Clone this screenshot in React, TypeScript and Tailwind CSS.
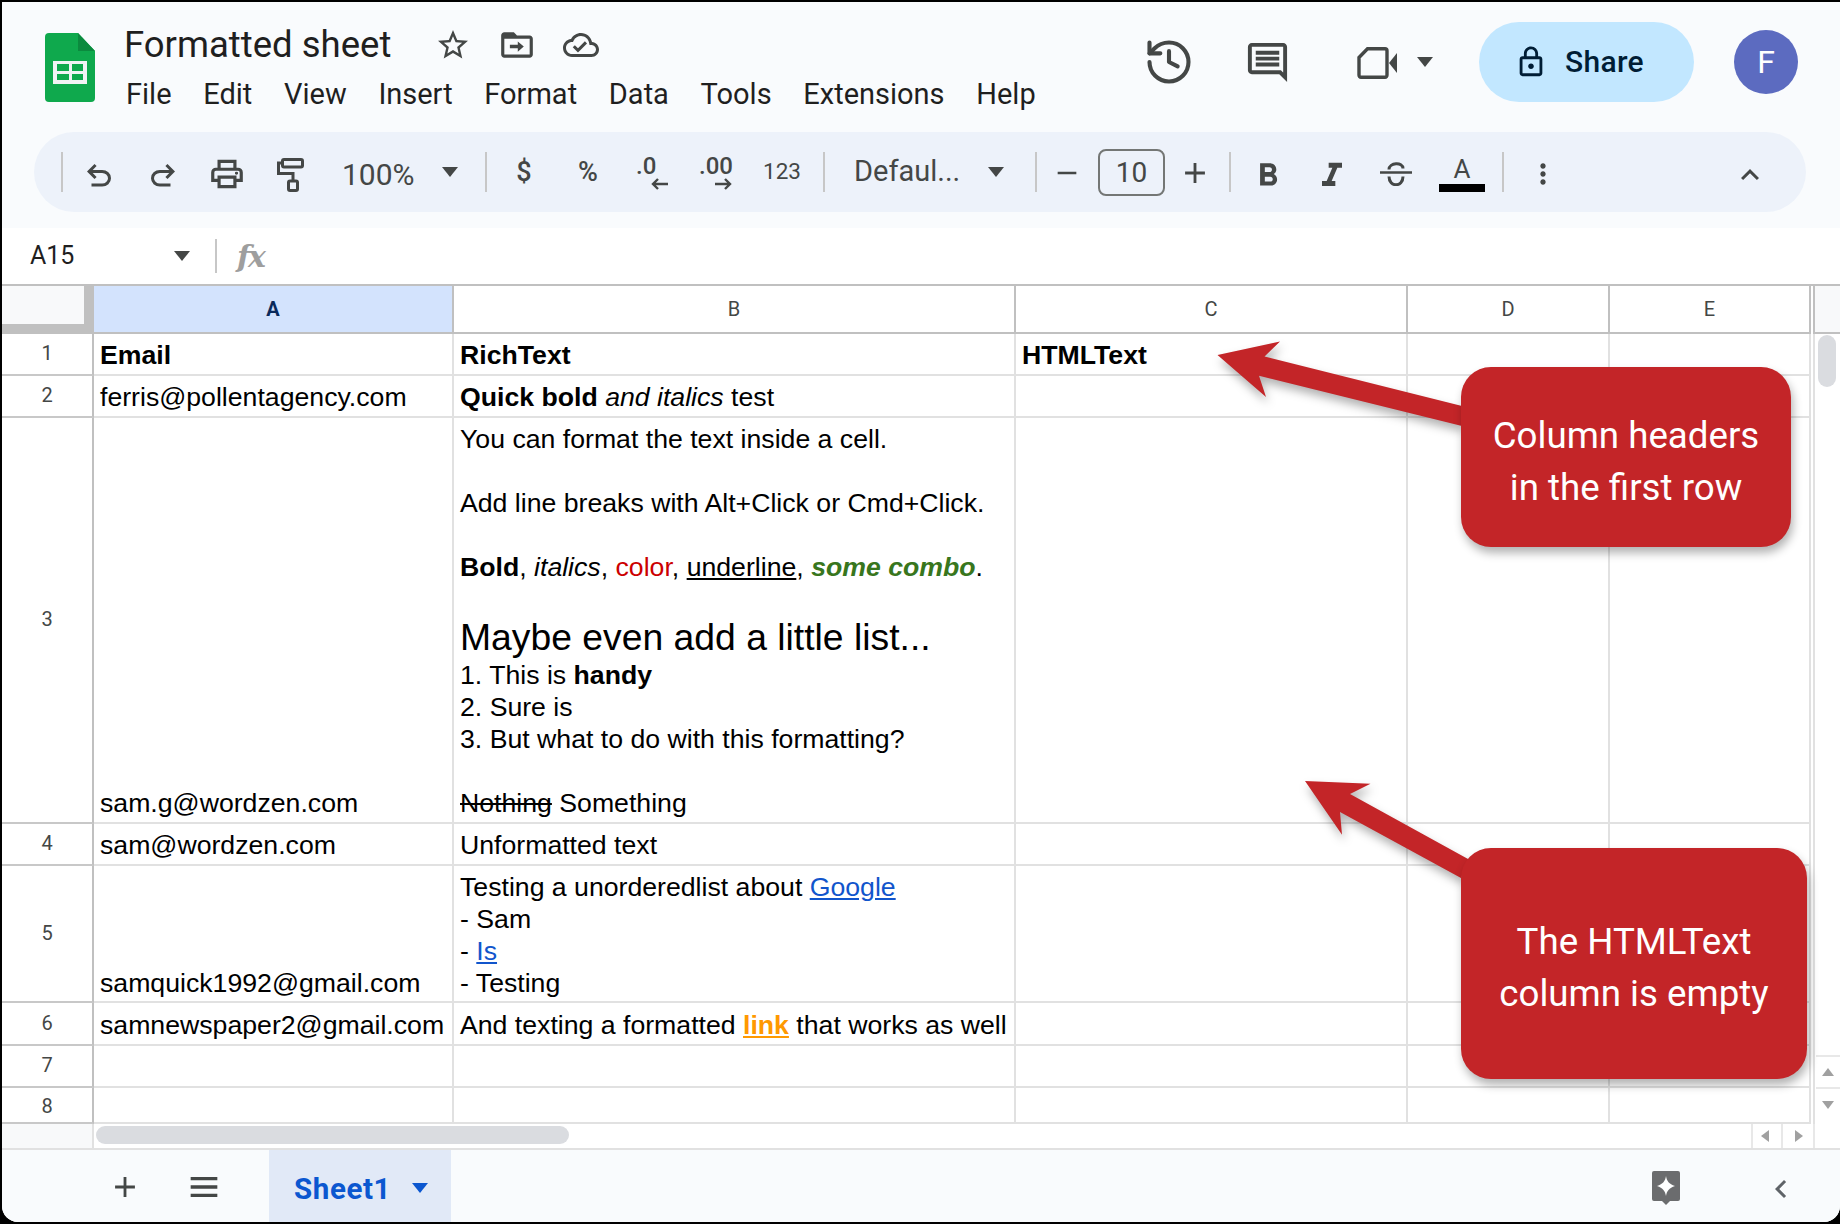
import { History } from 'lucide-react'
import type { ReactNode } from 'react'

const ICON = 'fill-[#444746]'

function Sym({ d, className }: { d: string; className?: string }) {
  return (
    <svg viewBox="0 -960 960 960" className={className}>
      <path d={d} />
    </svg>
  )
}

function Mat({ d, className }: { d: string; className?: string }) {
  return (
    <svg viewBox="0 0 24 24" className={className}>
      <path d={d} />
    </svg>
  )
}

const paths = {
  undo: 'M280-200v-80h284q63 0 109.5-40T720-420q0-60-46.5-100T564-560H312l104 104-56 56-200-200 200-200 56 56-104 104h252q97 0 166.5 63T800-420q0 94-69.5 157T564-200H280Z',
  redo: 'M396-200q-97 0-166.5-63T160-420q0-94 69.5-157T396-640h252L544-744l56-56 200 200-200 200-56-56 104-104H396q-63 0-109.5 40T240-420q0 60 46.5 100T396-280h284v80H396Z',
  print: 'M640-640v-120H320v120h-80v-200h480v200h-80Zm-480 80h640-640Zm560 100q17 0 28.5-11.5T760-500q0-17-11.5-28.5T720-540q-17 0-28.5 11.5T680-500q0 17 11.5 28.5T720-460Zm-80 260v-160H320v160h320Zm80 80H240v-160H80v-240q0-51 35-85.5t85-34.5h560q51 0 85.5 34.5T880-520v240H720v160Zm80-240v-160q0-17-11.5-28.5T760-560H200q-17 0-28.5 11.5T160-520v160h80v-80h480v80h80Z',
  star: 'M22 9.24l-7.19-.62L12 2 9.19 8.63 2 9.24l5.46 4.73L5.82 21 12 17.27 18.18 21l-1.63-7.03L22 9.24zM12 15.4l-3.76 2.27 1-4.28-3.32-2.88 4.38-.38L12 6.1l1.71 4.04 4.38.38-3.32 2.88 1 4.28L12 15.4z',
  folder: 'M20 6h-8l-2-2H4c-1.1 0-2 .9-2 2v12c0 1.1.9 2 2 2h16c1.1 0 2-.9 2-2V8c0-1.1-.9-2-2-2zm0 12H4V8h16v10zM12.500 9.800l3.800 3.200-3.800 3.200v-2.100H7.500v-2.200h5z',
  cloud: 'M19.35 10.04C18.67 6.59 15.64 4 12 4 9.11 4 6.6 5.64 5.35 8.04 2.34 8.36 0 10.91 0 14c0 3.31 2.69 6 6 6h13c2.76 0 5-2.24 5-5 0-2.64-2.05-4.78-4.65-4.96zM19 18H6c-2.21 0-4-1.79-4-4 0-2.05 1.53-3.76 3.56-3.97l1.07-.11.5-.95C8.08 7.14 9.94 6 12 6c2.62 0 4.88 1.86 5.39 4.43l.3 1.5 1.53.11c1.56.1 2.78 1.41 2.78 2.96 0 1.65-1.35 3-3 3zm-9-3.82l-2.09-2.09L6.5 13.5 10 17l6.01-6.01-1.41-1.41z',
  comment: 'M21.99 4c0-1.1-.89-2-1.99-2H4c-1.1 0-2 .9-2 2v12c0 1.1.9 2 2 2h14l4 4-.01-18zM20 4v13.17L18.83 16H4V4h16zM6 12h12v2H6zm0-3h12v2H6zm0-3h12v2H6z',
  lock: 'M18 8h-1V6c0-2.76-2.24-5-5-5S7 3.24 7 6v2H6c-1.1 0-2 .9-2 2v10c0 1.1.9 2 2 2h12c1.1 0 2-.9 2-2V10c0-1.1-.9-2-2-2zM9 6c0-1.66 1.34-3 3-3s3 1.34 3 3v2H9V6zm9 14H6V10h12v10zm-6-3c1.1 0 2-.9 2-2s-.9-2-2-2-2 .9-2 2 .9 2 2 2z',
  bold: 'M15.6 10.79c.97-.67 1.65-1.77 1.65-2.79 0-2.26-1.75-4-4-4H7v14h7.04c2.09 0 3.71-1.7 3.71-3.79 0-1.52-.86-2.82-2.15-3.42zM10 6.5h3c.83 0 1.5.67 1.5 1.5s-.67 1.5-1.5 1.5h-3v-3zm3.5 9H10v-3h3.5c.83 0 1.5.67 1.5 1.5s-.67 1.5-1.5 1.5z',
  italic: 'M10 4v3h2.21l-3.42 8H6v3h8v-3h-2.21l3.42-8H18V4z',
  more: 'M12 8c1.1 0 2-.9 2-2s-.9-2-2-2-2 .9-2 2 .9 2 2 2zm0 2c-1.1 0-2 .9-2 2s.9 2 2 2 2-.9 2-2-.9-2-2-2zm0 6c-1.1 0-2 .9-2 2s.9 2 2 2 2-.9 2-2-.9-2-2-2z',
  up: 'M7.41 15.41L12 10.83l4.59 4.58L18 14l-6-6-6 6z',
  plus: 'M19 13h-6v6h-2v-6H5v-2h6V5h2v6h6v2z',
  minus: 'M19 13H5v-2h14v2z',
  menu: 'M4 18h16v-2H4v2zm0-5h16v-2H4v2zM4 6v2h16V6H4z',
  left: 'M15.41 7.41L14 6l-6 6 6 6 1.41-1.41L10.83 12z',
}

function Caret({ className = 'fill-[#444746]' }: { className?: string }) {
  return (
    <svg viewBox="0 0 16 10" className={`w-[16px] h-[10px] ${className}`}>
      <path d="M0 0h16L8 10z" />
    </svg>
  )
}

function Divider({ ml }: { ml: string }) {
  return <div className={`w-[2px] h-[40px] bg-[#c7c7c7] ${ml}`} />
}

function Slot({ children }: { children: ReactNode }) {
  return <div className="w-[64px] h-[48px] flex items-center justify-center shrink-0">{children}</div>
}

function Logo() {
  return (
    <svg viewBox="0 0 50 69" className="w-[50px] h-[69px] shrink-0">
      <path d="M4 0h29l17 18v47a4 4 0 0 1-4 4H4a4 4 0 0 1-4-4V4a4 4 0 0 1 4-4z" fill="#0fa94d" />
      <path d="M33 0l17 18H33z" fill="#0b8a3e" />
      <path d="M8 28h34v23H8zM12 31v7h12v-7zM27 31v7h11v-7zM12 41v6h12v-6zM27 41v6h11v-6z" fill="#f1f3f4" fillRule="evenodd" />
    </svg>
  )
}

function TopBar() {
  return (
    <div className="flex h-[130px]">
      <div className="ml-[43px] mt-[31px]">
        <Logo />
      </div>
      <div className="ml-[30px] mt-[21px] flex flex-col">
        <div className="flex items-center h-[40px]">
          <span className="text-[36.5px] leading-[40px] text-[#1f1f1f] font-['Roboto',sans-serif] w-[311px] whitespace-nowrap mt-[4px] -ml-[1px]">Formatted sheet</span>
          <Mat d={paths.star} className={`w-[36px] h-[36px] mt-[4px] ${ICON}`} />
          <Mat d={paths.folder} className={`w-[38px] h-[38px] ml-[27px] mt-[4px] ${ICON}`} />
          <Mat d={paths.cloud} className={`w-[36px] h-[36px] ml-[27px] mt-[4px] ${ICON}`} />
        </div>
        <div className="flex gap-[31.7px] mt-[12px] ml-[1px] text-[29px] leading-[38px] text-[#1f1f1f] font-['Roboto',sans-serif]">
          {['File', 'Edit', 'View', 'Insert', 'Format', 'Data', 'Tools', 'Extensions', 'Help'].map((m) => (
            <span key={m}>{m}</span>
          ))}
        </div>
      </div>
      <div className="ml-auto mr-[42px] mt-[20px] h-[80px] flex items-center">
        <History className="w-[52px] h-[52px] text-[#444746]" strokeWidth={1.9} />
        <Mat d={paths.comment} className={`w-[47px] h-[47px] ml-[49px] ${ICON}`} />
        <svg viewBox="0 0 40 32" className="w-[40px] h-[32px] ml-[66px] mt-[2px]">
          <path d="M10.500 1.800H28a2 2 0 0 1 2 2V28a2 2 0 0 1-2 2.200H4a2 2 0 0 1-2-2.200V10.500z" fill="none" stroke="#444746" strokeWidth="3.4" />
          <path d="M32 16L40 6v20z" fill="#444746" />
        </svg>
        <div className="ml-[20px]">
          <Caret />
        </div>
        <button className="ml-[46px] w-[215px] h-[80px] rounded-[40px] bg-[#c2e7ff] flex items-center pl-[35px] text-[#001d35]">
          <Mat d={paths.lock} className="w-[34px] h-[34px] fill-[#001d35]" />
          <span className="ml-[17px] mb-[2px] text-[30px] font-medium font-['Roboto',sans-serif] tracking-[0.3px]">Share</span>
        </button>
        <div className="ml-[40px] w-[64px] h-[64px] rounded-full bg-[#5c6bc0] flex items-center justify-center text-white text-[32px] font-['Roboto',sans-serif]">
          F
        </div>
      </div>
    </div>
  )
}

function Toolbar() {
  const label = "font-['Roboto',sans-serif] text-[#444746]"
  return (
    <div className="ml-[32px] mr-[34px] h-[80px] rounded-[40px] bg-[#edf2fa] flex items-center pl-[27px] pr-[40px]">
      <Divider ml="" />
      <div className="flex ml-[4px]">
        <Slot><Sym d={paths.undo} className={`w-[36px] h-[36px] mt-[8px] ${ICON}`} /></Slot>
        <Slot><Sym d={paths.redo} className={`w-[36px] h-[36px] mt-[8px] ${ICON}`} /></Slot>
        <Slot><Sym d={paths.print} className={`w-[38px] h-[38px] mt-[4px] ${ICON}`} /></Slot>
        <Slot>
          <svg viewBox="0 0 27 34" className="w-[27px] h-[34px] mt-[6px] -ml-[2px] fill-none stroke-[#444746]" strokeWidth="3">
            <rect x="5.500" y="1.500" width="20" height="7.500" rx="1.500" />
            <path d="M5 5H1.500v10.500H16V23" />
            <rect x="11.500" y="23" width="9" height="9.500" rx="1.500" />
          </svg>
        </Slot>
      </div>
      <span className={`${label} ml-[19px] text-[30px] w-[73px] mt-[4px] whitespace-nowrap`}>100%</span>
      <div className="ml-[27px]"><Caret /></div>
      <Divider ml="ml-[27px]" />
      <div className="flex ml-[5px]">
        <Slot><span className={`${label} text-[27px] font-medium`}>$</span></Slot>
        <Slot><span className={`${label} text-[27px] font-medium`}>%</span></Slot>
        <Slot>
          <div className="flex flex-col">
            <span className={`${label} text-[24px] leading-[24px] font-medium`}>.0</span>
            <svg viewBox="0 0 18 12" className="w-[18px] h-[12px] ml-[14px] fill-none stroke-[#444746]" strokeWidth="2.4">
              <path d="M18 6H3M8 1L3 6l5 5" />
            </svg>
          </div>
        </Slot>
        <Slot>
          <div className="flex flex-col">
            <span className={`${label} text-[24px] leading-[24px] font-medium`}>.00</span>
            <svg viewBox="0 0 18 12" className="w-[18px] h-[12px] ml-[16px] fill-none stroke-[#444746]" strokeWidth="2.4">
              <path d="M0 6h15M10 1l5 5-5 5" />
            </svg>
          </div>
        </Slot>
        <Slot><span className={`${label} text-[22.5px] ml-[4px]`}>123</span></Slot>
      </div>
      <Divider ml="ml-[11px]" />
      <span className={`${label} ml-[29px] text-[29px] w-[106px] whitespace-nowrap`}>Defaul...</span>
      <div className="ml-[28px]"><Caret /></div>
      <Divider ml="ml-[31px]" />
      <Mat d={paths.minus} className={`w-[32px] h-[32px] ml-[14px] mt-[2px] ${ICON}`} />
      <div className={`${label} ml-[15px] w-[67px] h-[47px] border-2 border-[#747775] rounded-[8px] flex items-center justify-center pt-[2px] text-[28px]`}>10</div>
      <Mat d={paths.plus} className={`w-[34px] h-[34px] ml-[13px] mt-[2px] ${ICON}`} />
      <Divider ml="ml-[17px]" />
      <div className="flex ml-[5px]">
        <Slot><Mat d={paths.bold} className={`w-[38px] h-[38px] mt-[8px] shrink-0 ${ICON}`} /></Slot>
        <Slot><Mat d={paths.italic} className={`w-[40px] h-[40px] mt-[8px] shrink-0 ${ICON}`} /></Slot>
        <Slot>
          <svg viewBox="0 0 32 24" className="w-[32px] h-[24px] mt-[4px] fill-none stroke-[#444746]" strokeWidth="3">
            <path d="M0 10.500h32" strokeWidth="2.400" />
            <path d="M9 7.500C9 .5 23-.5 23 6.500M9 14.500c0 11 14 11 14 0" />
          </svg>
        </Slot>
        <Slot>
          <div className="flex flex-col items-center mt-[4px] ml-[4px]">
            <span className={`${label} text-[26px] leading-[26px]`}>A</span>
            <div className="w-[46px] h-[8px] bg-black mt-[2px]" />
          </div>
        </Slot>
      </div>
      <Divider ml="ml-[10px]" />
      <Mat d={paths.more} className={`w-[32px] h-[32px] ml-[23px] mt-[4px] ${ICON}`} />
      <Mat d={paths.up} className={`w-[36px] h-[36px] ml-auto mr-[-2px] mt-[6px] ${ICON}`} />
    </div>
  )
}

function FormulaBar() {
  return (
    <div className="h-[56px] bg-white flex items-center font-['Roboto',sans-serif]">
      <span className="ml-[28px] text-[25px] text-[#1f1f1f] w-[144px]">A15</span>
      <Caret />
      <div className="ml-[25px] w-[2px] h-[34px] bg-[#c7c7c7]" />
      <span className="ml-[20px] text-[30px] italic font-bold tracking-[-2px] text-[#9e9e9e] font-['DejaVu_Serif',serif]">fx</span>
    </div>
  )
}

const colLetters = ['A', 'B', 'C', 'D', 'E']
const rowNumbers = ['1', '2', '3', '4', '5', '6', '7', '8']

function Cell({ children, tall }: { children?: ReactNode; tall?: boolean }) {
  return (
    <div className={`border-r-2 border-b-2 border-[#e1e1e1] flex flex-col justify-end pl-[6px] text-[26.67px] leading-[32px] text-black whitespace-nowrap overflow-hidden ${tall ? 'pb-[2px]' : 'pb-[3px]'}`}>
      {children}
    </div>
  )
}

const rows: ReactNode[][] = [
  [<b>Email</b>, <b>RichText</b>, <b>HTMLText</b>],
  [
    'ferris@pollentagency.com',
    <span><b>Quick bold</b> <i>and italics</i> test</span>,
  ],
  [
    'sam.g@wordzen.com',
    <>
      <div>You can format the text inside a cell.</div>
      <div className="h-[32px]" />
      <div>Add line breaks with Alt+Click or Cmd+Click.</div>
      <div className="h-[32px]" />
      <div>
        <b>Bold</b>, <i>italics</i>, <span className="text-[#cc0000]">color</span>, <span className="underline">underline</span>,{' '}
        <b className="italic text-[#38761d]">some combo</b>.
      </div>
      <div className="h-[32px]" />
      <div className="text-[37.3px] leading-[44px]">Maybe even add a little list...</div>
      <div>1. This is <b>handy</b></div>
      <div>2. Sure is</div>
      <div>3. But what to do with this formatting?</div>
      <div className="h-[32px]" />
      <div><span className="line-through">Nothing</span> Something</div>
    </>,
  ],
  ['sam@wordzen.com', 'Unformatted text'],
  [
    'samquick1992@gmail.com',
    <>
      <div>Testing a unorderedlist about <span className="underline text-[#1155cc]">Google</span></div>
      <div>- Sam</div>
      <div>- <span className="underline text-[#1155cc]">Is</span></div>
      <div>- Testing</div>
    </>,
  ],
  [
    'samnewspaper2@gmail.com',
    <span>And texting a formatted <b className="underline text-[#ff9900]">link</b> that works as well</span>,
  ],
  [],
  [],
]

function Grid() {
  return (
    <div className="border-t-2 border-[#c0c0c0] grid grid-cols-[92px_360px_562px_392px_202px_201px_1fr] grid-rows-[48px_42px_42px_406px_42px_137px_43px_42px_36px] font-['Liberation_Sans',Arial,sans-serif]">
      {/* column header row */}
      <div className="bg-[#c0c0c0]">
        <div className="w-[82px] h-[38px] bg-[#f8f9fa]" />
      </div>
      {colLetters.map((c, i) => (
        <div
          key={c}
          className={`border-r-2 border-b-2 border-[#c0c0c0] flex items-center justify-center text-[20px] font-['Roboto',sans-serif] ${
            i === 0 ? 'bg-[#d3e3fd] text-[#0b2a5b] font-bold' : 'bg-white text-[#444746]'
          }`}
        >
          {c}
        </div>
      ))}
      <div className="border-l-2 border-b-2 border-[#c0c0c0] ml-[2px] bg-[#f8f9fa]" />

      {rows.map((r, i) => (
        <div key={i} className="contents">
          <div className={`border-r-2 border-b-2 border-r-[#c0c0c0] border-b-[#c8c8c8] flex items-center justify-center text-[20px] text-[#444746] font-['Roboto',sans-serif] ${i === 7 ? 'pt-[2px]' : 'pb-[2px]'}`}>
            {rowNumbers[i]}
          </div>
          <Cell tall={i === 4}>{r[0]}</Cell>
          <Cell tall={i === 4}>{r[1]}</Cell>
          <Cell>{r[2]}</Cell>
          <Cell />
          <Cell />
          {i === 0 ? (
            <div className="row-span-8 border-l-2 border-[#e1e1e1] ml-[2px] bg-white flex flex-col pt-[1px] pl-[3px]">
              <div className="w-[18px] h-[52px] rounded-[9px] bg-[#dadce0]" />
              <div className="mt-auto mb-[3px] -ml-[2px] h-[66px] border-t-2 border-[#e8e8e8] flex flex-col items-center">
                <div className="h-[32px] w-full flex items-center justify-center border-b-2 border-[#e8e8e8]">
                  <svg viewBox="0 0 12 8" className="w-[12px] h-[8px] fill-[#a0a0a0]"><path d="M6 0l6 8H0z" /></svg>
                </div>
                <div className="h-[32px] flex items-center">
                  <svg viewBox="0 0 12 8" className="w-[12px] h-[8px] fill-[#a0a0a0]"><path d="M6 8L0 0h12z" /></svg>
                </div>
              </div>
            </div>
          ) : null}
        </div>
      ))}
    </div>
  )
}

function ScrollRow() {
  return (
    <div className="h-[26px] border-b-2 border-[#e1e1e1] flex bg-white">
      <div className="w-[92px] bg-[#f8f9fa] border-r-2 border-[#e1e1e1]" />
      <div className="w-[473px] h-[18px] mt-[2px] ml-[2px] rounded-[9px] bg-[#dadce0]" />
      <div className="ml-auto w-[66px] mr-[23px] flex h-full">
        <div className="w-[32px] border-x-2 border-[#e8e8e8] flex items-center justify-center">
          <svg viewBox="0 0 8 12" className="w-[8px] h-[12px] -ml-[4px] fill-[#a0a0a0]"><path d="M0 6l8-6v12z" /></svg>
        </div>
        <div className="w-[32px] border-r-2 border-[#e8e8e8] flex items-center justify-center">
          <svg viewBox="0 0 8 12" className="w-[8px] h-[12px] ml-[2px] fill-[#a0a0a0]"><path d="M8 6L0 0v12z" /></svg>
        </div>
      </div>
    </div>
  )
}

function BottomBar() {
  return (
    <div className="h-[72px] bg-[#f9fbfd] flex items-center font-['Roboto',sans-serif]">
      <Mat d={paths.plus} className={`w-[34px] h-[34px] ml-[106px] mt-[2px] ${ICON}`} />
      <Mat d={paths.menu} className={`w-[40px] h-[40px] ml-[42px] mt-[2px] ${ICON}`} />
      <div className="ml-[45px] w-[182px] h-full bg-[#e1e9f7] flex items-center pl-[25px]">
        <span className="text-[29.5px] font-bold tracking-[0.6px] text-[#0b57d0] mt-[6px]">Sheet1</span>
        <Caret className="ml-[21px] mt-[4px] fill-[#0b57d0]" />
      </div>
      <svg viewBox="0 0 28 34" className="ml-auto w-[28px] h-[34px] mt-[4px]">
        <path d="M2 0h24a2 2 0 0 1 2 2v26a2 2 0 0 1-2 2h-8l-4 4-4-4H2a2 2 0 0 1-2-2V2a2 2 0 0 1 2-2z" fill="#6b6c6e" />
        <path d="M14 5c.8 5 3 8 9 10-6 2-8.200 5-9 10-.8-5-3-8-9-10 6-2 8.200-5 9-10z" fill="#fff" />
      </svg>
      <Mat d={paths.left} className="w-[36px] h-[36px] ml-[83px] mr-[41px] mt-[6px] fill-[#5f6368]" />
    </div>
  )
}

function Callout({ className, lines }: { className: string; lines: string[] }) {
  return (
    <div
      className={`absolute bg-[#c32528] rounded-[30px] shadow-[2px_6px_10px_rgba(0,0,0,0.3)] flex flex-col items-center justify-center text-white font-['Roboto',sans-serif] text-[36.7px] leading-[52.5px] ${className}`}
    >
      {lines.map((l) => (
        <div key={l}>{l}</div>
      ))}
    </div>
  )
}

function Annotations() {
  return (
    <>
      <svg viewBox="0 0 1840 1224" className="absolute left-0 top-0 w-[1840px] h-[1224px] pointer-events-none drop-shadow-[2px_6px_5px_rgba(0,0,0,0.3)]">
        <path d="M1217.500 355L1280 341.400 1264.500 356.400 1461 405.700V425.700L1259 375.700 1266 397z" fill="#c32528" />
        <path d="M1305 781L1370.500 783.700 1350 794 1468.500 859.300 1461 878 1340 812 1342 834.700z" fill="#c32528" />
      </svg>
      <Callout className="left-[1461px] top-[367px] w-[330px] h-[180px] pt-[10px]" lines={['Column headers', 'in the first row']} />
      <Callout className="left-[1461px] top-[848px] w-[346px] h-[231px] pt-[9px]" lines={['The HTMLText', 'column is empty']} />
    </>
  )
}

export default function App() {
  return (
    <div className="relative w-[1840px] h-[1224px] overflow-hidden bg-black">
      <div className="mt-[2px] ml-[2px] h-[1220px] bg-white rounded-b-[16px] overflow-hidden flex flex-col">
        <div className="h-[226px] bg-[#f9fbfd] flex flex-col">
          <TopBar />
          <Toolbar />
        </div>
        <FormulaBar />
        <Grid />
        <ScrollRow />
        <BottomBar />
      </div>
      <Annotations />
    </div>
  )
}
